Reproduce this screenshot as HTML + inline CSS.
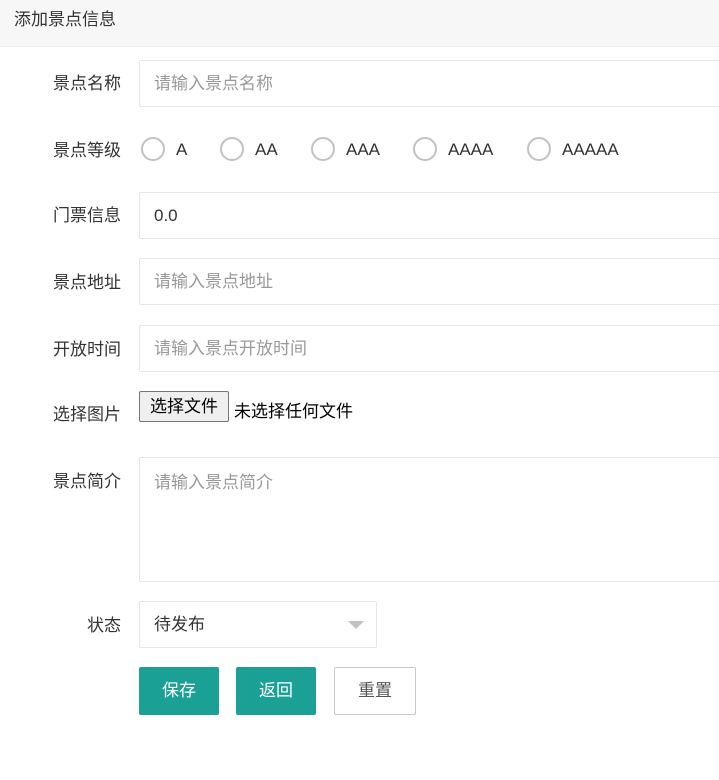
<!DOCTYPE html>
<html><head><meta charset="utf-8"><style>
*{box-sizing:border-box;margin:0;padding:0}
body{width:719px;height:780px;overflow:hidden;background:#fff;font-family:"Liberation Sans","Noto Sans CJK SC",sans-serif;font-size:17px;color:#333;position:relative}
.hd{position:absolute;left:0;top:0;width:719px;height:47px;background:#f7f7f7;border-bottom:1px solid #eee;padding-left:14px;line-height:40px;color:#333}
.lb{position:absolute;right:598px;width:110px;text-align:right;color:#333}
.in{position:absolute;left:139px;width:600px;height:47px;border:1px solid #e6e6e6;border-radius:2px;padding-left:14px;line-height:45px;color:#999}
.radio{position:absolute;top:137px;width:24px;height:24px;border:2px solid #c2c2c2;border-radius:50%}
.rt{position:absolute;top:138px;line-height:24px;color:#333}
.btn{position:absolute;top:667px;height:48px;width:80px;line-height:46px;text-align:center;border-radius:2px;color:#fff;background:#1aa094;border:1px solid #1aa094}
</style></head><body>
<div class="hd">添加景点信息</div>
<div class="lb" style="top:69px">景点名称</div>
<div class="in" style="top:60px">请输入景点名称</div>
<div class="lb" style="top:136px">景点等级</div>
<div class="radio" style="left:141px"></div><div class="rt" style="left:176px">A</div>
<div class="radio" style="left:220px"></div><div class="rt" style="left:255px">AA</div>
<div class="radio" style="left:311px"></div><div class="rt" style="left:346px">AAA</div>
<div class="radio" style="left:413px"></div><div class="rt" style="left:448px">AAAA</div>
<div class="radio" style="left:527px"></div><div class="rt" style="left:562px">AAAAA</div>
<div class="lb" style="top:201px">门票信息</div>
<div class="in" style="top:192px;color:#333">0.0</div>
<div class="lb" style="top:268px">景点地址</div>
<div class="in" style="top:258px">请输入景点地址</div>
<div class="lb" style="top:335px">开放时间</div>
<div class="in" style="top:325px">请输入景点开放时间</div>
<div class="lb" style="top:400px">选择图片</div>
<div style="position:absolute;left:139px;top:391px;width:90px;height:31px;border:1px solid #767676;border-radius:2px;background:#efefef;text-align:center;line-height:29px;color:#000">选择文件</div>
<div style="position:absolute;left:234px;top:397px;color:#000">未选择任何文件</div>
<div class="lb" style="top:467px">景点简介</div>
<div class="in" style="top:457px;height:125px;line-height:normal;padding-top:10px">请输入景点简介</div>
<div class="lb" style="top:611px">状态</div>
<div class="in" style="top:601px;width:238px;color:#333">待发布</div>
<div style="position:absolute;left:348px;top:621px;width:0;height:0;border-left:8px solid transparent;border-right:8px solid transparent;border-top:8px solid #c2c2c2"></div>
<div class="btn" style="left:139px">保存</div>
<div class="btn" style="left:236px">返回</div>
<div class="btn" style="left:334px;width:82px;background:#fff;color:#555;border-color:#c9c9c9">重置</div>
</body></html>
